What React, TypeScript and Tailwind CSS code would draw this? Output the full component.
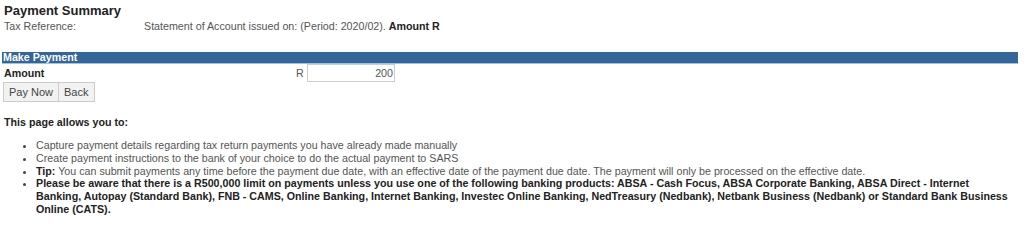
import React from "react";

export default function App() {
  return (
    <div className="w-[1024px] h-[227px] bg-white font-['Liberation_Sans',Arial,sans-serif] text-[10.7px] text-[#555] overflow-hidden">
      <div className="pl-[4px] pt-[3px]">
        <div className="text-[13px] font-bold leading-[16px] text-[#222]">Payment Summary</div>
        <div className="flex leading-[13px] mt-[1px]">
          <div className="w-[140px]">Tax Reference:</div>
          <div>
            Statement of Account issued on: (Period: 2020/02). <span className="font-bold text-[#222]">Amount R</span>
          </div>
        </div>
      </div>
      <div className="mt-[19px] ml-[2px] w-[1016px] h-[12px] bg-[#336699] border-b border-[#9cc3e6] text-white font-bold leading-[11px] pl-[1px]">
        Make Payment
      </div>
      <div className="flex items-center h-[18px] pl-[4px]">
        <div className="w-[292px] font-bold text-[#222]">Amount</div>
        <div className="w-[11px] text-[#555]">R</div>
        <div className="w-[88px] h-[18px] border border-[#ccc] text-right pr-[1px] leading-[16px]">200</div>
      </div>
      <div className="flex pl-[3px]">
        <button className="h-[20px] px-[5px] bg-[#f2f2f2] border border-[#ccc] text-[11px] text-[#444] leading-[18px]">Pay Now</button>
        <button className="h-[20px] px-[5px] bg-[#f2f2f2] border border-[#ccc] border-l-0 text-[11px] text-[#444] leading-[18px]">Back</button>
      </div>
      <div className="pl-[4px] mt-[14px] font-bold text-[#222] leading-[13px]">This page allows you to:</div>
      <ul className="mt-[10px] pl-[36px] pr-[10px] list-disc leading-[12.8px] marker:text-[#444]">
        <li>Capture payment details regarding tax return payments you have already made manually</li>
        <li>Create payment instructions to the bank of your choice to do the actual payment to SARS</li>
        <li>
          <span className="font-bold text-[#222]">Tip:</span> You can submit payments any time before the payment due date, with an effective date of the payment due date. The payment will only be processed on the effective date.
        </li>
        <li className="font-bold text-[#222]">
          Please be aware that there is a R500,000 limit on payments unless you use one of the following banking products: ABSA - Cash Focus, ABSA Corporate Banking, ABSA Direct - Internet Banking, Autopay (Standard Bank), FNB - CAMS, Online Banking, Internet Banking, Investec Online Banking, NedTreasury (Nedbank), Netbank Business (Nedbank) or Standard Bank Business Online (CATS).
        </li>
      </ul>
    </div>
  );
}
